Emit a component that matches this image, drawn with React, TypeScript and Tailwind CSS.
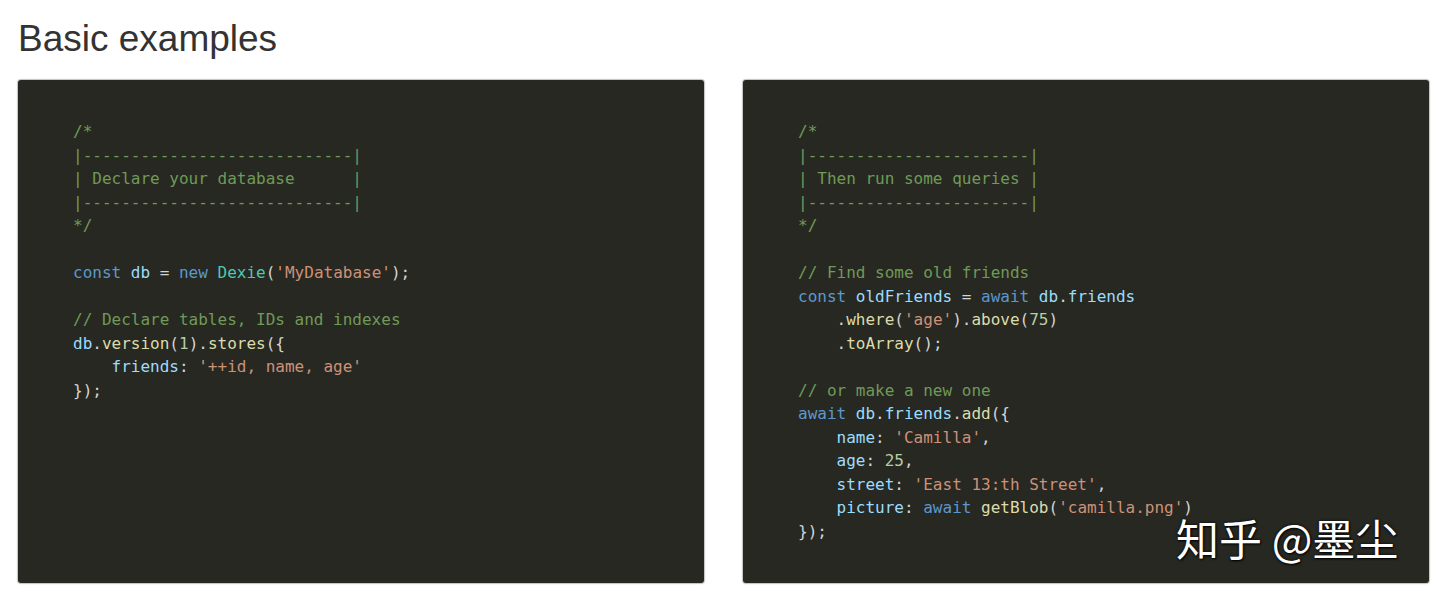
import React from "react";

type Tok = [string, string];

const C = "text-[#6f9a58]";
const K = "text-[#5c98cd]";
const T = "text-[#4ec9b0]";
const S = "text-[#ce9178]";
const V = "text-[#9cdcfe]";
const F = "text-[#dcdcaa]";
const N = "text-[#b5cea8]";
const P = "text-[#d4d4d4]";

const left: Tok[][] = [
  [["/*", C]],
  [["|----------------------------|", C]],
  [["| Declare your database      |", C]],
  [["|----------------------------|", C]],
  [["*/", C]],
  [],
  [
    ["const", K],
    [" ", P],
    ["db", V],
    [" = ", P],
    ["new", K],
    [" ", P],
    ["Dexie", T],
    ["(", P],
    ["'MyDatabase'", S],
    [");", P],
  ],
  [],
  [["// Declare tables, IDs and indexes", C]],
  [
    ["db", V],
    [".", P],
    ["version", F],
    ["(", P],
    ["1", N],
    [").", P],
    ["stores", F],
    ["({", P],
  ],
  [
    ["    ", P],
    ["friends", V],
    [": ", P],
    ["'++id, name, age'", S],
  ],
  [["});", P]],
];

const right: Tok[][] = [
  [["/*", C]],
  [["|-----------------------|", C]],
  [["| Then run some queries |", C]],
  [["|-----------------------|", C]],
  [["*/", C]],
  [],
  [["// Find some old friends", C]],
  [
    ["const", K],
    [" ", P],
    ["oldFriends", V],
    [" = ", P],
    ["await", K],
    [" ", P],
    ["db", V],
    [".", P],
    ["friends", V],
  ],
  [
    ["    .", P],
    ["where", F],
    ["(", P],
    ["'age'", S],
    [").", P],
    ["above", F],
    ["(", P],
    ["75", N],
    [")", P],
  ],
  [
    ["    .", P],
    ["toArray", F],
    ["();", P],
  ],
  [],
  [["// or make a new one", C]],
  [
    ["await", K],
    [" ", P],
    ["db", V],
    [".", P],
    ["friends", V],
    [".", P],
    ["add", F],
    ["({", P],
  ],
  [
    ["    ", P],
    ["name", V],
    [": ", P],
    ["'Camilla'", S],
    [",", P],
  ],
  [
    ["    ", P],
    ["age", V],
    [": ", P],
    ["25", N],
    [",", P],
  ],
  [
    ["    ", P],
    ["street", V],
    [": ", P],
    ["'East 13:th Street'", S],
    [",", P],
  ],
  [
    ["    ", P],
    ["picture", V],
    [": ", P],
    ["await", K],
    [" ", P],
    ["getBlob", F],
    ["(", P],
    ["'camilla.png'", S],
    [")", P],
  ],
  [["});", P]],
];

function Code({ lines }: { lines: Tok[][] }) {
  return (
    <pre className="m-0 font-['DejaVu_Sans_Mono',monospace] text-[16px] leading-[23.5px] whitespace-pre">
      {lines.map((line, i) => (
        <div key={i} className="h-[23.5px]">
          {line.map(([t, c], j) => (
            <span key={j} className={c}>
              {t}
            </span>
          ))}
        </div>
      ))}
    </pre>
  );
}

export default function App() {
  return (
    <div className="w-[1440px] h-[600px] bg-white overflow-hidden pl-[18px] pt-[19px]">
      <h1 className="m-0 h-[40px] text-[37px] leading-[40px] text-[#333333] font-['Liberation_Sans',Arial,sans-serif] font-normal">
        Basic examples
      </h1>
      <div className="mt-[21px] flex gap-[39px] items-stretch">
        <div className="w-[686px] bg-[#272822] rounded-[3px] shadow-[0_0_1px_1px_rgba(0,0,0,0.25)] pl-[55px] py-[40px]">
          <Code lines={left} />
        </div>
        <div className="relative w-[686px] bg-[#272822] rounded-[3px] shadow-[0_0_1px_1px_rgba(0,0,0,0.25)] pl-[55px] py-[40px]">
          <Code lines={right} />
          <div className="absolute left-[433px] top-[436px] text-white text-[43px] leading-none font-['Noto_Sans_CJK_SC',sans-serif] whitespace-nowrap [text-shadow:0_0_3px_rgba(0,0,0,0.9),1px_1px_2px_rgba(0,0,0,0.9)]">
            知乎 @墨尘
          </div>
        </div>
      </div>
    </div>
  );
}
